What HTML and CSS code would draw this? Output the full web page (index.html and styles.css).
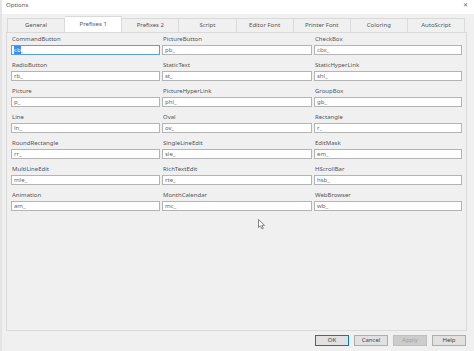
FILE: index.html
```html
<!DOCTYPE html>
<html lang="en">
<head>
    <meta charset="UTF-8">
    <title>Options</title>
    <link rel="stylesheet" href="styles.css">
</head>

<body>
    <div class="window">
        <div class="titlebar">
            <span class="title">Options</span>
            <span class="close">✕</span>
        </div>

        <div class="tabs">
            <div class="tab">General</div>
            <div class="tab active">Prefixes 1</div>
            <div class="tab">Prefixes 2</div>
            <div class="tab">Script</div>
            <div class="tab">Editor Font</div>
            <div class="tab">Printer Font</div>
            <div class="tab">Coloring</div>
            <div class="tab">AutoScript</div>
        </div>

        <div class="panel">
            <div class="fields">
                <div class="field">
                    <div class="label">CommandButton</div>
                    <div class="input focus"><span class="sel">cb</span>_</div>
                </div>
                <div class="field">
                    <div class="label">PictureButton</div>
                    <div class="input">pb_</div>
                </div>
                <div class="field">
                    <div class="label">CheckBox</div>
                    <div class="input">cbx_</div>
                </div>

                <div class="field">
                    <div class="label">RadioButton</div>
                    <div class="input">rb_</div>
                </div>
                <div class="field">
                    <div class="label">StaticText</div>
                    <div class="input">st_</div>
                </div>
                <div class="field">
                    <div class="label">StaticHyperLink</div>
                    <div class="input">shl_</div>
                </div>

                <div class="field">
                    <div class="label">Picture</div>
                    <div class="input">p_</div>
                </div>
                <div class="field">
                    <div class="label">PictureHyperLink</div>
                    <div class="input">phl_</div>
                </div>
                <div class="field">
                    <div class="label">GroupBox</div>
                    <div class="input">gb_</div>
                </div>

                <div class="field">
                    <div class="label">Line</div>
                    <div class="input">ln_</div>
                </div>
                <div class="field">
                    <div class="label">Oval</div>
                    <div class="input">ov_</div>
                </div>
                <div class="field">
                    <div class="label">Rectangle</div>
                    <div class="input">r_</div>
                </div>

                <div class="field">
                    <div class="label">RoundRectangle</div>
                    <div class="input">rr_</div>
                </div>
                <div class="field">
                    <div class="label">SingleLineEdit</div>
                    <div class="input">sle_</div>
                </div>
                <div class="field">
                    <div class="label">EditMask</div>
                    <div class="input">em_</div>
                </div>

                <div class="field">
                    <div class="label">MultiLineEdit</div>
                    <div class="input">mle_</div>
                </div>
                <div class="field">
                    <div class="label">RichTextEdit</div>
                    <div class="input">rte_</div>
                </div>
                <div class="field">
                    <div class="label">HScrollBar</div>
                    <div class="input">hsb_</div>
                </div>

                <div class="field">
                    <div class="label">Animation</div>
                    <div class="input">am_</div>
                </div>
                <div class="field">
                    <div class="label">MonthCalendar</div>
                    <div class="input">mc_</div>
                </div>
                <div class="field">
                    <div class="label">WebBrowser</div>
                    <div class="input">wb_</div>
                </div>
            </div>

            <!-- mouse pointer left on the page -->
            <svg class="cursor" width="8" height="11" viewBox="0 0 8 11">
                <path d="M0.5 0.5 L0.5 8.5 L2.5 6.8 L4 10 L5.3 9.4 L3.9 6.3 L6.5 6.3 Z" fill="#fff" stroke="#666" stroke-width="0.8"/>
            </svg>
        </div>

        <div class="footer">
            <div class="btn default">OK</div>
            <div class="btn">Cancel</div>
            <div class="btn disabled">Apply</div>
            <div class="btn">Help</div>
        </div>
    </div>
</body>

</html>
```

FILE: styles.css
```css
* {
    box-sizing: border-box;
}

body {
    margin: 0;
    background-color: #f0f0f0;
    font-family: "Noto Sans", "Open Sans", sans-serif;
    font-size: 6px;
    color: #555;
}

.window {
    width: 474px;
    height: 351px;
    display: flex;
    flex-direction: column;
    border-left: 2px solid #e4e4e4;
}

.titlebar {
    height: 14px;
    background-color: #fff;
    display: flex;
    align-items: flex-start;
    justify-content: space-between;
    padding: 1px 6px 0 4px;
    line-height: 8px;
    color: #555;
}

.close {
    font-size: 6px;
    color: #666;
}

.tabs {
    display: flex;
    align-items: flex-end;
    height: 18px;
    margin: 0 9px 0 5px;
}

.tab {
    flex: 1;
    height: 14px;
    line-height: 13px;
    text-align: center;
    border: 1px solid #dadada;
    border-bottom: none;
    border-left: none;
    background-color: #f0f0f0;
    color: #555;
}

.tab:first-child {
    border-left: 1px solid #dadada;
}

.tab.active {
    height: 16px;
    line-height: 15px;
    background-color: #fff;
}

.panel {
    position: relative;
    height: 299px;
    margin: 0 7px 0 4px;
    border: 1px solid #dadada;
    background-color: #f0f0f0;
    padding: 2px 0 0 4px;
}

.fields {
    display: grid;
    grid-template-columns: 149px 150px 148px;
    column-gap: 2px;
    row-gap: 6px;
}

.label {
    height: 8px;
    line-height: 8px;
    margin-bottom: 2px;
    padding-left: 1px;
    color: #555;
}

.input {
    height: 10px;
    line-height: 8px;
    border: 1px solid #b4b4b4;
    background-color: #fff;
    padding-left: 2px;
    color: #666;
}

.input.focus {
    border-color: #5a9fe0;
}

.sel {
    background-color: #3390ff;
    color: #fff;
}

.cursor {
    position: absolute;
    left: 251px;
    top: 186px;
}

.footer {
    display: flex;
    justify-content: flex-end;
    gap: 5px;
    padding: 4px 8px 0 0;
}

.btn {
    width: 34px;
    height: 11px;
    line-height: 9px;
    text-align: center;
    border: 1px solid #adadad;
    background-color: #e1e1e1;
    color: #444;
}

.btn.default {
    border-color: #0078d7;
}

.btn.disabled {
    background-color: #cccccc;
    border-color: #bfbfbf;
    color: #a0a0a0;
}
```
